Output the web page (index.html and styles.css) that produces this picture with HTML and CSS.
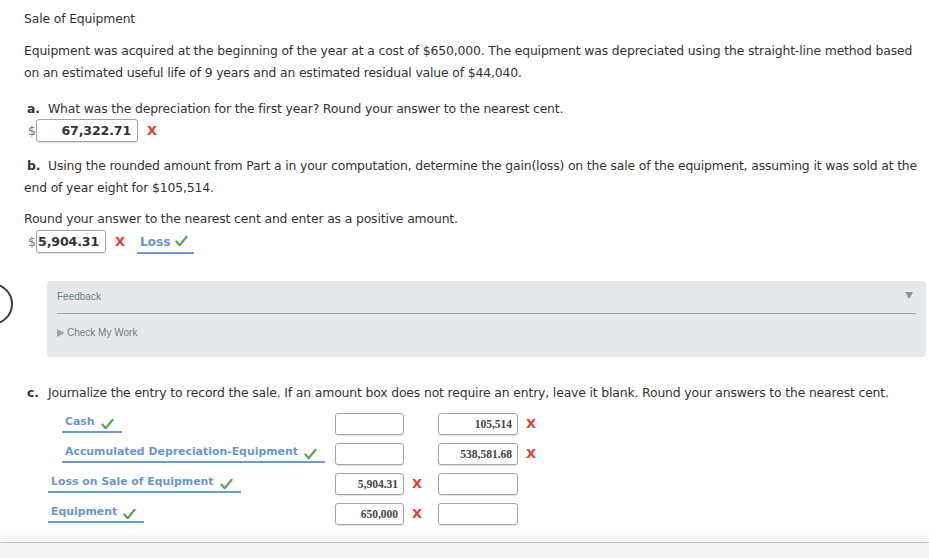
FILE: index.html
```html
<!DOCTYPE html>
<html>
<head>
<meta charset="utf-8">
<link rel="stylesheet" href="styles.css">
</head>
<body>
<div class="page">
  <p class="title">Sale of Equipment</p>
  <p class="intro">Equipment was acquired at the beginning of the year at a cost of $650,000. The equipment was depreciated using the straight-line method based on an estimated useful life of 9 years and an estimated residual value of $44,040.</p>

  <p class="qa"><b class="lbl">a.</b>What was the depreciation for the first year? Round your answer to the nearest cent.</p>
  <div class="ans">
    <span class="dollar">$</span>
    <span class="box box-a">67,322.71</span>
    <span class="x">X</span>
  </div>

  <p class="qb"><b class="lbl">b.</b>Using the rounded amount from Part a in your computation, determine the gain(loss) on the sale of the equipment, assuming it was sold at the end of year eight for $105,514.</p>
  <p class="round">Round your answer to the nearest cent and enter as a positive amount.</p>
  <div class="ans">
    <span class="dollar">$</span>
    <span class="box box-b">5,904.31</span>
    <span class="x">X</span>
    <span class="sel">Loss <svg class="chk" viewBox="0 0 14 12" width="13" height="12"><path d="M1.5 6.5 L5 10.5 L12.5 1.5" fill="none" stroke="#5aa55a" stroke-width="2.4" stroke-linecap="round" stroke-linejoin="round"/></svg></span>
  </div>
</div>

<div class="fb-row">
  <div class="circle"></div>
  <div class="panel">
    <div class="panel-head"><span>Feedback</span><span class="caret"></span></div>
    <div class="panel-body"><span class="tri"></span>Check My Work</div>
  </div>
</div>

<div class="page">
  <p class="qc"><b class="lbl">c.</b>Journalize the entry to record the sale. If an amount box does not require an entry, leave it blank. Round your answers to the nearest cent.</p>
  <div class="journal">
    <div class="jrow">
      <div class="acct credit"><span class="name">Cash <svg class="chk" viewBox="0 0 14 12" width="13" height="12"><path d="M1.5 6.5 L5 10.5 L12.5 1.5" fill="none" stroke="#5aa55a" stroke-width="2.4" stroke-linecap="round" stroke-linejoin="round"/></svg></span></div>
      <span class="jbox dr"></span><span class="mark"></span>
      <span class="jbox cr">105,514</span><span class="mark x">X</span>
    </div>
    <div class="jrow">
      <div class="acct credit"><span class="name">Accumulated Depreciation-Equipment <svg class="chk" viewBox="0 0 14 12" width="13" height="12"><path d="M1.5 6.5 L5 10.5 L12.5 1.5" fill="none" stroke="#5aa55a" stroke-width="2.4" stroke-linecap="round" stroke-linejoin="round"/></svg></span></div>
      <span class="jbox dr"></span><span class="mark"></span>
      <span class="jbox cr">538,581.68</span><span class="mark x">X</span>
    </div>
    <div class="jrow">
      <div class="acct"><span class="name">Loss on Sale of Equipment <svg class="chk" viewBox="0 0 14 12" width="13" height="12"><path d="M1.5 6.5 L5 10.5 L12.5 1.5" fill="none" stroke="#5aa55a" stroke-width="2.4" stroke-linecap="round" stroke-linejoin="round"/></svg></span></div>
      <span class="jbox dr">5,904.31</span><span class="mark x">X</span>
      <span class="jbox cr"></span><span class="mark"></span>
    </div>
    <div class="jrow">
      <div class="acct"><span class="name">Equipment <svg class="chk" viewBox="0 0 14 12" width="13" height="12"><path d="M1.5 6.5 L5 10.5 L12.5 1.5" fill="none" stroke="#5aa55a" stroke-width="2.4" stroke-linecap="round" stroke-linejoin="round"/></svg></span></div>
      <span class="jbox dr">650,000</span><span class="mark x">X</span>
      <span class="jbox cr"></span><span class="mark"></span>
    </div>
  </div>
</div>

<div class="footer"></div>
</body>
</html>
```

FILE: styles.css
```css
html, body {
  margin: 0;
  padding: 0;
  background: #fff;
  overflow: hidden;
}
body {
  width: 929px;
  height: 558px;
  font-family: "DejaVu Sans", Verdana, sans-serif;
  font-size: 12.4px;
  letter-spacing: -0.15px;
  color: #333;
  display: flex;
  flex-direction: column;
}
p { margin: 0; }
.page {
  padding: 0 8px 0 24px;
}
.title {
  margin-top: 8px;
  line-height: 22px;
}
.intro {
  margin-top: 10px;
  line-height: 22px;
}
.qa {
  margin-top: 15px;
  line-height: 20px;
}
.qb {
  margin-top: 13px;
  line-height: 22px;
}
.round {
  margin-top: 9px;
  line-height: 22px;
}
.qc {
  margin-top: 25px;
  line-height: 22px;
}
.lbl {
  display: inline-block;
  font-weight: bold;
  width: 21px;
  padding-left: 3px;
}

.ans {
  display: flex;
  align-items: center;
  height: 23px;
  padding-left: 4px;
}
.dollar {
  color: #777;
  width: 8px;
}
.box {
  box-sizing: border-box;
  height: 23px;
  border: 1px solid #a5a5a5;
  border-radius: 3px;
  box-shadow: 0 1px 1px rgba(0,0,0,0.12);
  font-weight: bold;
  font-size: 12.6px;
  line-height: 21px;
  text-align: right;
  padding-right: 6px;
  color: #333;
}
.box-a { width: 102px; }
.box-b { width: 70px; }
.x {
  color: #e63b2e;
  font-weight: bold;
  font-size: 13px;
  margin-left: 9px;
}
.sel {
  margin-left: 12px;
  color: #6a97cb;
  font-weight: bold;
  border-bottom: 2px solid #6b9bd0;
  padding: 0 6px 1px 3px;
  line-height: 19px;
  display: inline-flex;
  align-items: center;
  gap: 5px;
  margin-top: 2px;
}
.chk { display: inline-block; flex: none; }

.fb-row {
  display: flex;
  align-items: flex-start;
  margin-top: 28px;
}
.circle {
  flex: none;
  box-sizing: border-box;
  width: 42px;
  height: 42px;
  border: 2.5px solid #3a3a3a;
  border-radius: 50%;
  margin-left: -29px;
  margin-top: 2px;
}
.panel {
  margin-left: 34px;
  width: 879px;
  height: 76px;
  box-sizing: border-box;
  background: #e5e9ec;
  border-radius: 4px;
  padding: 10px 10px 0 10px;
  font-family: "Liberation Sans", Arial, sans-serif;
  font-size: 10px;
  letter-spacing: 0;
  color: #6d7d7e;
}
.panel-head {
  display: flex;
  justify-content: space-between;
  align-items: flex-start;
  line-height: 12px;
  padding-bottom: 10px;
  border-bottom: 1px solid #a3a6a8;
}
.caret {
  width: 0;
  height: 0;
  border-left: 4px solid transparent;
  border-right: 4px solid transparent;
  border-top: 7px solid #8e9396;
  margin-top: 1px;
  margin-right: 3px;
}
.panel-body {
  margin-top: 13px;
  line-height: 12px;
  display: flex;
  align-items: center;
}
.tri {
  width: 0;
  height: 0;
  border-top: 4px solid transparent;
  border-bottom: 4px solid transparent;
  border-left: 8px solid #a3a6a8;
  margin-right: 2px;
}

.journal {
  margin-top: 9px;
  margin-left: 24px;
  display: flex;
  flex-direction: column;
  gap: 8px;
}
.jrow {
  display: flex;
  align-items: flex-start;
  height: 22px;
}
.acct {
  width: 287px;
  flex: none;
  box-sizing: border-box;
  white-space: nowrap;
}
.acct.credit { padding-left: 14px; }
.name {
  display: inline-flex;
  align-items: center;
  gap: 6px;
  color: #6a97cb;
  font-weight: bold;
  font-size: 10.9px;
  letter-spacing: 0;
  white-space: nowrap;
  padding: 0 8px 1px 3px;
  border-bottom: 2px solid #6b9bd0;
  line-height: 14px;
  margin-top: -1px;
}
.name .chk { margin-top: 3px; }
.jbox {
  box-sizing: border-box;
  height: 22px;
  border: 1px solid #a5a5a5;
  border-radius: 3px;
  box-shadow: 0 1px 1px rgba(0,0,0,0.12);
  font-family: "Liberation Serif", "Times New Roman", serif;
  font-weight: bold;
  font-size: 11.5px;
  letter-spacing: 0;
  color: #444;
  text-align: right;
  padding-right: 5px;
  line-height: 20px;
}
.jbox.dr { width: 69px; }
.jbox.cr { width: 80px; }
.mark {
  width: 34px;
  flex: none;
  line-height: 22px;
}
.mark.x {
  margin-left: 0;
  padding-left: 8px;
  box-sizing: border-box;
}

.footer {
  margin-top: auto;
  height: 15px;
  flex: none;
  background: #f3f3f3;
  border-top: 1px solid #c4c4c4;
  box-shadow: 0 -6px 8px rgba(0,0,0,0.06);
}
```
